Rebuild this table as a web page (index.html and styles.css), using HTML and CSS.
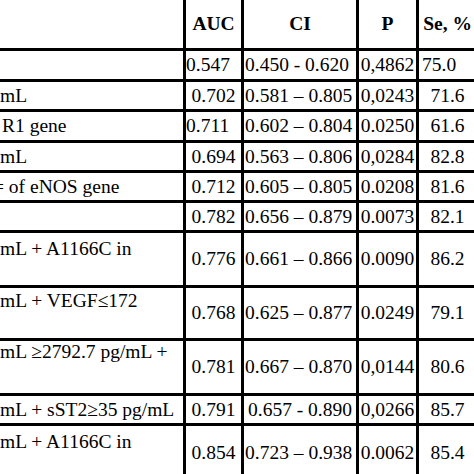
FILE: index.html
```html
<!DOCTYPE html>
<html>
<head>
<meta charset="utf-8">
<link rel="stylesheet" href="styles.css">
</head>
<body>
<div class="table">
  <div class="c"></div><div class="c h">AUC</div><div class="c h">CI</div><div class="c h">P</div><div class="c h">Se, %</div>

  <div class="c lab"></div><div class="c l">0.547</div><div class="c l ci">0.450 - 0.620</div><div class="c">0,4862</div><div class="c l se">75.0</div>

  <div class="c lab">mL</div><div class="c">0.702</div><div class="c l ci">0.581 – 0.805</div><div class="c">0,0243</div><div class="c">71.6</div>

  <div class="c lab r1">R1 gene</div><div class="c l">0.711</div><div class="c l ci">0.602 – 0.804</div><div class="c">0.0250</div><div class="c">61.6</div>

  <div class="c lab">mL</div><div class="c">0.694</div><div class="c l ci">0.563 – 0.806</div><div class="c">0,0284</div><div class="c">82.8</div>

  <div class="c lab"><span class="cut">= of eNOS gene</span></div><div class="c">0.712</div><div class="c l ci">0.605 – 0.805</div><div class="c">0.0208</div><div class="c">81.6</div>

  <div class="c lab"></div><div class="c">0.782</div><div class="c l ci">0.656 – 0.879</div><div class="c">0.0073</div><div class="c">82.1</div>

  <div class="c lab top t6">mL + A1166C in</div><div class="c">0.776</div><div class="c l ci">0.661 – 0.866</div><div class="c">0.0090</div><div class="c">86.2</div>

  <div class="c lab top t3">mL + VEGF≤172</div><div class="c">0.768</div><div class="c l ci">0.625 – 0.877</div><div class="c">0.0249</div><div class="c">79.1</div>

  <div class="c lab top t1">mL ≥2792.7 pg/mL +</div><div class="c">0.781</div><div class="c l ci">0.667 – 0.870</div><div class="c">0,0144</div><div class="c">80.6</div>

  <div class="c lab">mL + sST2≥35 pg/mL</div><div class="c">0.791</div><div class="c">0.657 - 0.890</div><div class="c">0,0266</div><div class="c">85.7</div>

  <div class="c lab top t6">mL + A1166C in</div><div class="c">0.854</div><div class="c l ci">0.723 – 0.938</div><div class="c">0.0062</div><div class="c">85.4</div>
</div>
</body>
</html>
```
FILE: styles.css
```css
html, body {
  margin: 0;
  padding: 0;
  background: #fff;
  overflow: hidden;
}

body {
  width: 474px;
  height: 474px;
}

.table {
  display: grid;
  grid-template-columns: 183px 55px 112px 57px 57px;
  grid-template-rows: 48px 28px 27px 28px 27px 27px 27px 52px 50px 52px 27px 53px;
  gap: 3px;
  background: #000;
  width: max-content;
  font-family: "Liberation Serif", "Times New Roman", serif;
  font-size: 19.5px;
  line-height: 20px;
  color: #000;
}

.c {
  background: #fff;
  display: flex;
  align-items: center;
  justify-content: center;
  white-space: nowrap;
  overflow: hidden;
}

.h {
  font-weight: bold;
}

.l {
  justify-content: flex-start;
}

.ci {
  padding-left: 1px;
}

.se {
  padding-left: 3px;
}

.lab {
  justify-content: flex-start;
  padding-left: 0;
}

.r1 {
  padding-left: 2px;
}

.cut {
  margin-left: -7px;
}

.top {
  align-items: flex-start;
}

.t6 { padding-top: 6px; }
.t3 { padding-top: 3px; }
.t1 { padding-top: 1px; }
```
